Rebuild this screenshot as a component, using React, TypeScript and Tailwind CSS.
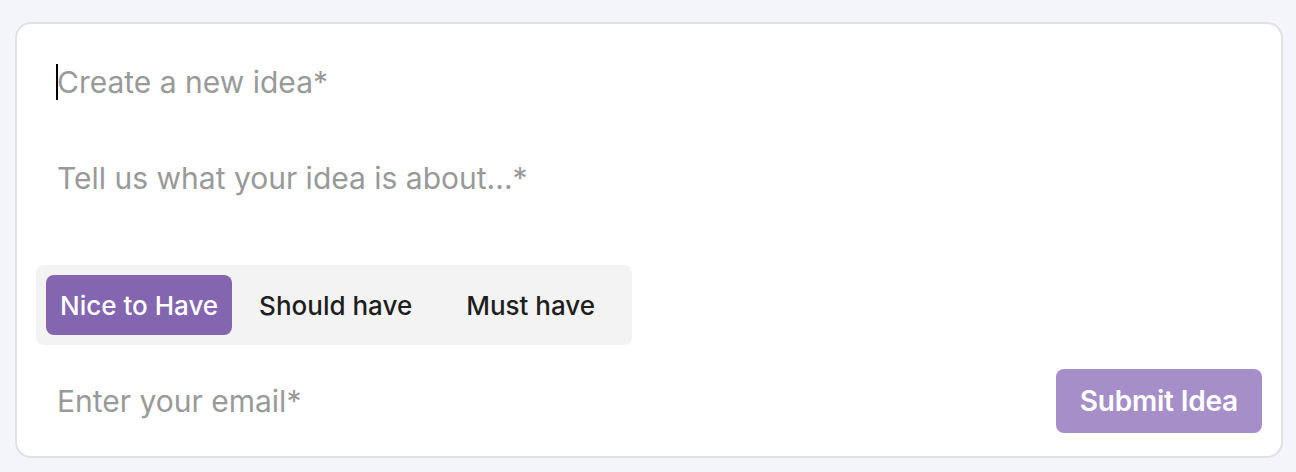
import React, { useState } from 'react';

const priorities = ['Nice to Have', 'Should have', 'Must have'];

export default function App() {
    const [priority, setPriority] = useState('Nice to Have');

    return (
        <div className="min-h-screen bg-[#f4f5fa] pl-[15px] pr-[13px] pt-[22px] pb-[14px] font-['Inter',sans-serif]">
            <div className="rounded-[16px] border-2 border-[#e1e1e4] bg-white pl-[40px] pr-[19px] pt-[23px] pb-[23px]">
                <div className="relative">
                    <span className="absolute left-[-1px] top-[17px] h-[36px] w-[2px] bg-black" />
                    <input
                        className="h-[70px] w-full bg-transparent text-[30px] text-[#222] outline-none placeholder:text-[#999999]"
                        placeholder="Create a new idea*"
                    />
                </div>
                <textarea
                    className="mt-[25px] block h-[123px] w-full resize-none bg-transparent py-[18px] text-[30px] leading-[36px] text-[#222] outline-none placeholder:text-[#999999]"
                    placeholder="Tell us what your idea is about...*"
                />
                <div className="ml-[-21px] inline-flex items-center rounded-[8px] bg-[#f3f3f3] p-[10px]">
                    {priorities.map((p) => (
                        <button
                            key={p}
                            onClick={() => setPriority(p)}
                            className={
                                p === priority
                                    ? 'h-[60px] rounded-[8px] bg-[#8466b0] px-[14px] text-[26px] font-medium text-white'
                                    : 'h-[60px] rounded-[8px] px-[27px] text-[26px] font-medium text-[#1e1e1e]'
                            }
                        >
                            {p}
                        </button>
                    ))}
                </div>
                <div className="mt-[24px] flex items-center justify-between">
                    <input
                        className="h-[64px] flex-1 bg-transparent text-[30px] text-[#222] outline-none placeholder:text-[#999999]"
                        placeholder="Enter your email*"
                    />
                    <button className="h-[64px] rounded-[8px] bg-[#a68fc8] px-[24px] text-[28px] font-semibold tracking-[-0.2px] text-white">
                        Submit Idea
                    </button>
                </div>
            </div>
        </div>
    );
}
